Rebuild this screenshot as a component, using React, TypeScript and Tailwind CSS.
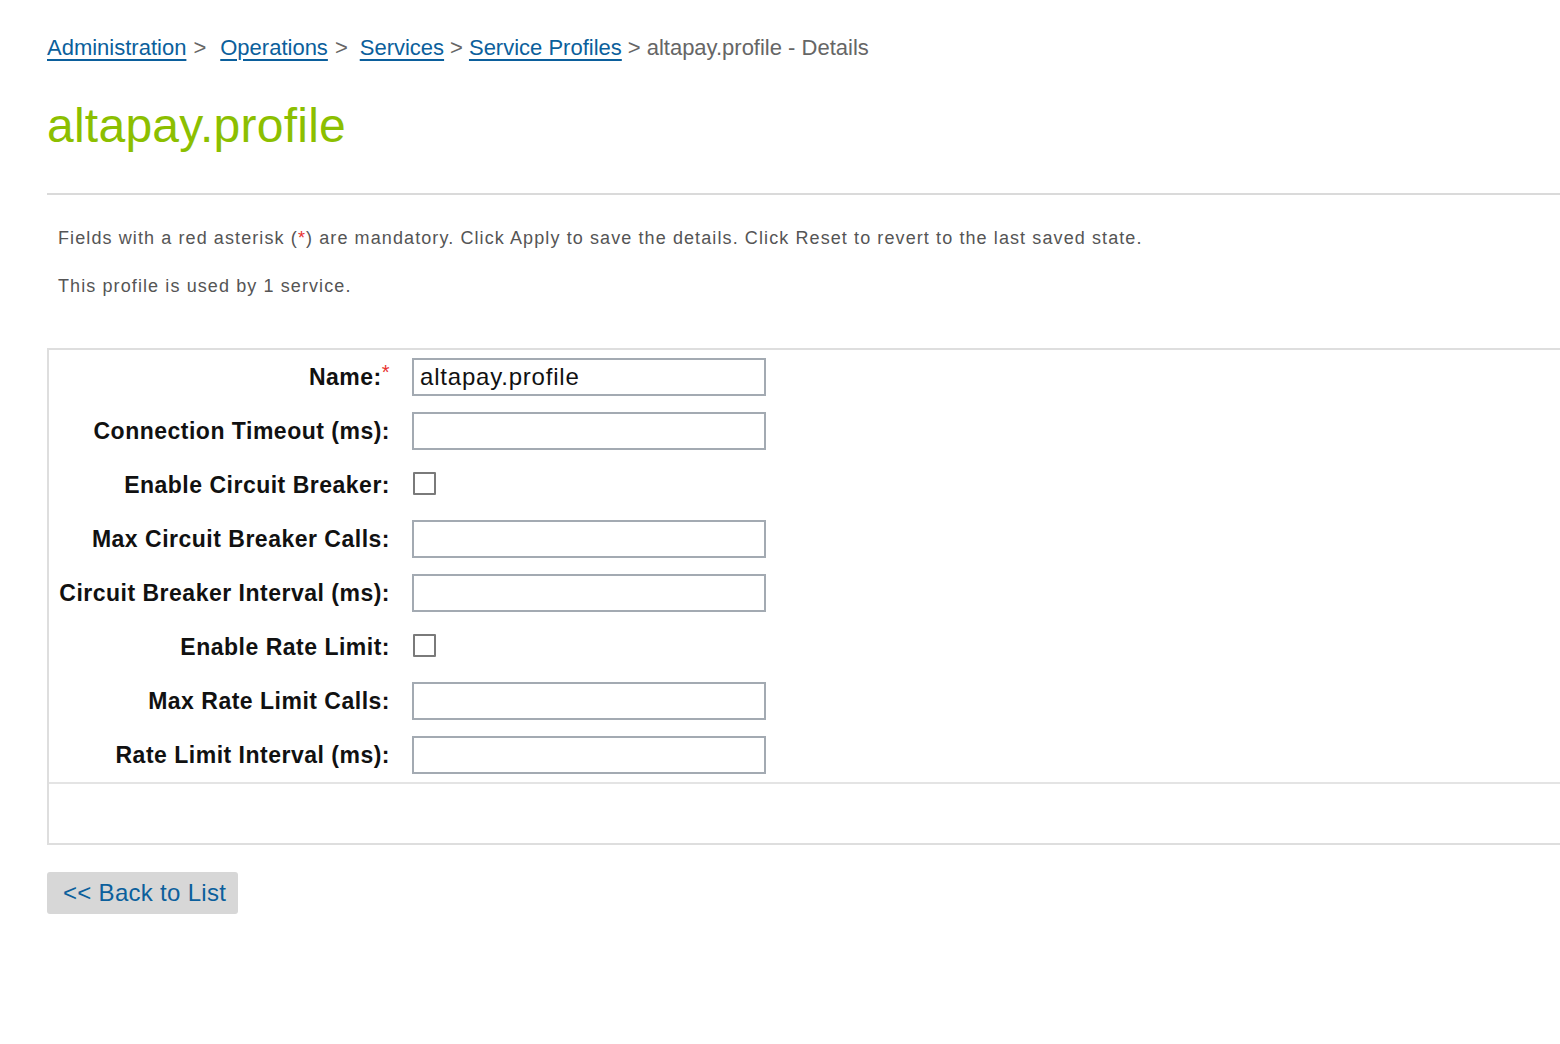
import React from "react";

type Field = {
  label: string;
  kind: "text" | "check";
  value?: string;
  required?: boolean;
};

const fields: Field[] = [
  { label: "Name:", kind: "text", value: "altapay.profile", required: true },
  { label: "Connection Timeout (ms):", kind: "text" },
  { label: "Enable Circuit Breaker:", kind: "check" },
  { label: "Max Circuit Breaker Calls:", kind: "text" },
  { label: "Circuit Breaker Interval (ms):", kind: "text" },
  { label: "Enable Rate Limit:", kind: "check" },
  { label: "Max Rate Limit Calls:", kind: "text" },
  { label: "Rate Limit Interval (ms):", kind: "text" },
];

function Crumb({ children }: { children: React.ReactNode }) {
  return (
    <a href="#" className="text-[#0b5f9c] underline underline-offset-[4px] decoration-[2px]">
      {children}
    </a>
  );
}

export default function App() {
  return (
    <div className="min-h-screen bg-white pl-[47px] pt-[34px] font-['Liberation_Sans',Arial,sans-serif] overflow-hidden">
      <nav className="text-[22px] leading-[28px] text-[#666] whitespace-nowrap">
        <Crumb>Administration</Crumb>
        <span className="ml-[7px] mr-[14px]">&gt;</span>
        <Crumb>Operations</Crumb>
        <span className="ml-[7px] mr-[12px]">&gt;</span>
        <Crumb>Services</Crumb>
        <span className="mx-[6px]">&gt;</span>
        <Crumb>Service Profiles</Crumb>
        <span className="mx-[6px]">&gt;</span>
        <span>altapay.profile - Details</span>
      </nav>

      <h1 className="mt-[36px] text-[48px] leading-[56px] tracking-[0.25px] text-[#8cbf00]">altapay.profile</h1>

      <div className="mt-[39px] h-[2px] bg-[#dadada]" />

      <div className="pl-[11px] text-[18px] leading-[24px] tracking-[1.1px] text-[#555]">
        <p className="mt-[31px]">
          Fields with a red asterisk (<span className="text-[#e8312f]">*</span>) are mandatory. Click Apply to save the
          details. Click Reset to revert to the last saved state.
        </p>
        <p className="mt-[24px]">This profile is used by 1 service.</p>
      </div>

      <div className="mt-[50px] border-2 border-r-0 border-[#dedede]">
        <div className="grid grid-cols-[341px_auto] gap-x-[22px] gap-y-[16px] pt-[8px] pb-[8px] items-center">
          {fields.map((f) => (
            <React.Fragment key={f.label}>
              <label className="text-right text-[23px] leading-[38px] tracking-[0.5px] font-bold text-[#111] whitespace-nowrap">
                {f.label}
                {f.required && <span className="text-[#e8312f] font-normal text-[20px] align-top leading-[28px]">*</span>}
              </label>
              <div className="h-[38px] flex items-center">
                {f.kind === "text" ? (
                  <input
                    type="text"
                    defaultValue={f.value}
                    className="w-[354px] h-[38px] border-2 border-[#a3aab2] bg-white px-[6px] text-[24px] tracking-[0.8px] text-[#111] outline-none font-['Liberation_Sans',Arial,sans-serif]"
                  />
                ) : (
                  <input
                    type="checkbox"
                    className="appearance-none ml-[1px] mb-[4px] w-[23px] h-[23px] border-2 border-[#7a7a7a] bg-white rounded-[1px]"
                  />
                )}
              </div>
            </React.Fragment>
          ))}
        </div>
        <div className="h-[61px] border-t-2 border-[#e4e4e4]" />
      </div>

      <button className="mt-[27px] h-[42px] w-[191px] rounded-[3px] bg-[#d7d7d7] text-left pl-[16px] text-[24px] tracking-[0.3px] text-[#0b5f9c] font-['Liberation_Sans',Arial,sans-serif]">
        &lt;&lt; Back to List
      </button>
    </div>
  );
}
